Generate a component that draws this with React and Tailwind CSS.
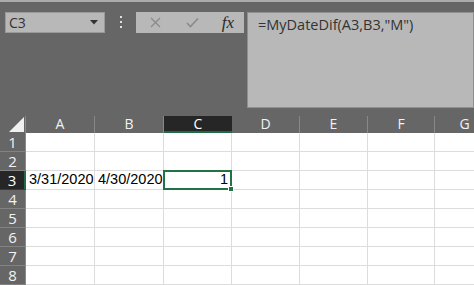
import React from 'react';

const cols = [
  { key: 'A', w: 'w-[69px]' },
  { key: 'B', w: 'w-[69px]' },
  { key: 'C', w: 'w-[68px]' },
  { key: 'D', w: 'w-[68px]' },
  { key: 'E', w: 'w-[68px]' },
  { key: 'F', w: 'w-[67px]' },
  { key: 'G', w: 'w-[60px]' },
];

const data = {
  3: { A: '3/31/2020', B: '4/30/2020', C: '1' },
};

const FormulaBar = () => (
  <div className="flex items-start h-[118px] pt-[10px] pl-[5px]">
    {/* name box */}
    <div className="flex items-center justify-between w-[100px] h-[21px] bg-[#b8b8b8] border border-[#9a9a9a] pl-[3px] pr-[6px] text-[14px] text-[#333] font-['Open_Sans',sans-serif]">
      <span>C3</span>
      <svg width="8" height="5" viewBox="0 0 8 5">
        <polygon points="0,0 8,0 4,4.5" fill="#333" />
      </svg>
    </div>

    {/* grip dots */}
    <div className="w-[31px] h-[21px] flex flex-col items-center justify-center gap-[3px]">
      <span className="w-[2px] h-[2px] bg-[#e0e0e0]" />
      <span className="w-[2px] h-[2px] bg-[#e0e0e0]" />
      <span className="w-[2px] h-[2px] bg-[#e0e0e0]" />
    </div>

    {/* cancel / enter / fx */}
    <div className="flex items-center w-[108px] h-[21px] bg-[#b8b8b8]">
      <div className="w-[36px] flex justify-center pl-[2px]">
        <svg width="11" height="11" viewBox="0 0 11 11">
          <path d="M1 1 L10 10 M10 1 L1 10" stroke="#8a8a8a" strokeWidth="1.3" />
        </svg>
      </div>
      <div className="w-[36px] flex justify-center pl-[4px]">
        <svg width="13" height="11" viewBox="0 0 13 11">
          <path d="M1 6 L4.5 9.5 L12 1.5" stroke="#8a8a8a" strokeWidth="1.6" fill="none" />
        </svg>
      </div>
      <div className="w-[36px] flex justify-center pl-[4px] italic text-[17px] text-[#2a2a2a] font-['Liberation_Serif',serif] leading-none">
        fx
      </div>
    </div>

    {/* formula input */}
    <div className="ml-[3px] flex-1 h-[96px] bg-[#b8b8b8] border border-[#8f8f8f] pl-[10px] pt-[1px] text-[14.5px] text-[#333] font-['Open_Sans',sans-serif]">
      =MyDateDif(A3,B3,"M")
    </div>
  </div>
);

const HeaderRow = () => (
  <div className="flex h-[18px] text-[14px] text-[#f2f2f2] font-['Open_Sans',sans-serif]">
    <div className="w-[26px] shrink-0 flex items-end justify-end pr-[1px] pb-[1px] border-r border-[#8a8a8a]">
      <svg width="15" height="15" viewBox="0 0 15 15">
        <polygon points="15,0 15,15 0,15" fill="#f0f0f0" />
      </svg>
    </div>
    {cols.map((c) =>
      c.key === 'C' ? (
        <div
          key={c.key}
          className={`${c.w} shrink-0 flex items-center justify-center bg-[#262626] border-b-2 border-[#1e6b45] text-white leading-none pt-[1px]`}
        >
          {c.key}
        </div>
      ) : (
        <div
          key={c.key}
          className={`${c.w} shrink-0 flex items-center justify-center border-r border-[#888] leading-none`}
        >
          {c.key}
        </div>
      )
    )}
  </div>
);

const Row = ({ n }) => {
  const row = data[n] || {};
  const selected = n === 3;
  return (
    <div className="flex h-[19px]">
      <div
        className={`w-[26px] shrink-0 flex items-center justify-center text-[15px] font-['Open_Sans',sans-serif] border-b ${
          selected
            ? 'bg-[#262626] text-white border-[#3a3a3a] border-r-2 border-r-[#1e6b45]'
            : 'bg-[#666] text-[#f2f2f2] border-[#828282] border-r border-r-[#8a8a8a]'
        }`}
      >
        {n}
      </div>
      {cols.map((c) => {
        const isSel = selected && c.key === 'C';
        const value = row[c.key];
        return (
          <div
            key={c.key}
            className={`${c.w} shrink-0 relative bg-white border-r border-b border-[#dcdcdc] flex items-center text-[14.5px] text-black font-['Liberation_Sans',sans-serif] whitespace-nowrap ${
              isSel ? 'justify-end pr-[3px]' : 'pl-[3px]'
            }`}
          >
            {value}
            {isSel && (
              <div className="absolute -left-[1px] -top-[1px] -right-[1px] -bottom-[1px] border-2 border-[#217346] z-10">
                <span className="absolute -right-[4px] -bottom-[4px] w-[6px] h-[6px] bg-[#217346] border border-white" />
              </div>
            )}
          </div>
        );
      })}
    </div>
  );
};

export default function App() {
  return (
    <div className="w-[474px] h-[285px] overflow-hidden bg-[#666] flex flex-col">
      <div className="h-[2px] bg-[#ababab]" />
      <FormulaBar />
      <HeaderRow />
      {[1, 2, 3, 4, 5, 6, 7, 8].map((n) => (
        <Row key={n} n={n} />
      ))}
    </div>
  );
}
